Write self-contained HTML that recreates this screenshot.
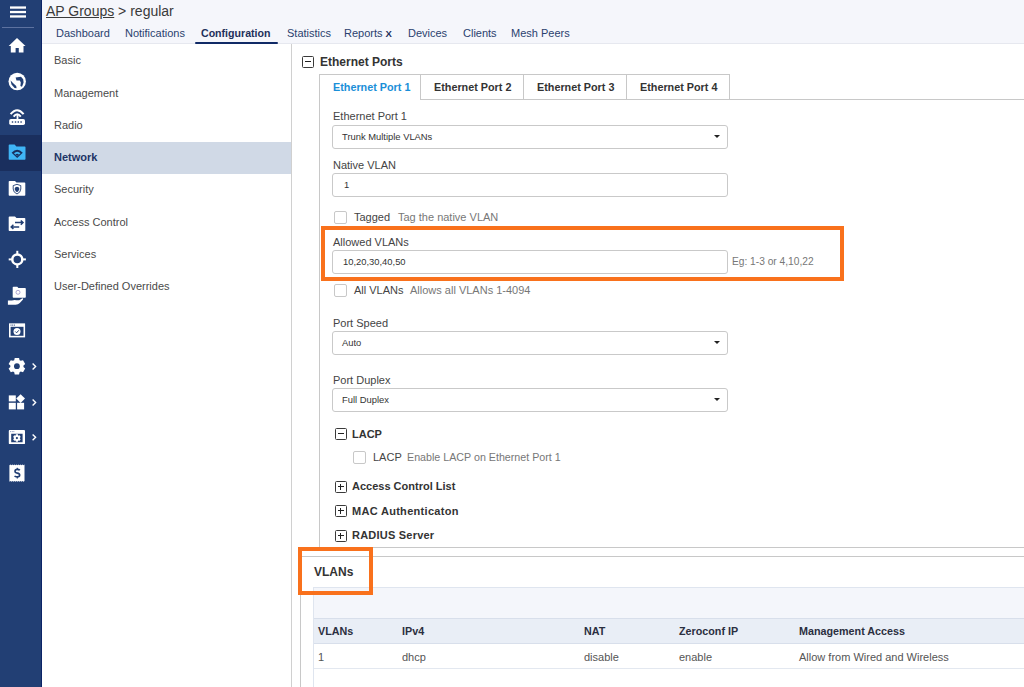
<!DOCTYPE html>
<html><head><meta charset="utf-8">
<style>
*{box-sizing:border-box;margin:0;padding:0}
html,body{width:1024px;height:687px;overflow:hidden;background:#fff;font-family:"Liberation Sans",sans-serif;color:#333}
.abs{position:absolute}
#side{left:0;top:0;width:42px;height:687px;background:#223f74;border-right:1px solid #0b2366}
#hdr{left:42px;top:0;width:982px;height:44px;background:#f5f6fb;border-bottom:1px solid #e6e8ef}
.t{position:absolute;white-space:nowrap;line-height:1}
.menu{font-size:11px;color:#4a4a4a}
.lbl{font-size:11px;color:#444}
.box{position:absolute;border:1px solid #c9c9c9;border-radius:3px;background:#fff}
.val{font-size:9.4px;color:#333}
.cb{position:absolute;width:13px;height:13px;border:1px solid #c8c8c8;border-radius:2px;background:#fff}
.caret{position:absolute;width:0;height:0;border-left:3.3px solid transparent;border-right:3.3px solid transparent;border-top:3.6px solid #222}
.sq{position:absolute;width:12px;height:12px;border:1.2px solid #3a3a3a;border-radius:1.5px}
.sq:before{content:"";position:absolute;left:1.8px;right:1.8px;top:4.3px;height:1.2px;background:#222}
.sq.plus:after{content:"";position:absolute;top:1.8px;bottom:1.8px;left:4.3px;width:1.2px;background:#222}
.b{font-weight:bold}
.orange{position:absolute;border:3px solid #f9711c}
</style></head><body>
<div id="side" class="abs"></div>
<svg class="abs" style="left:0;top:0" width="42" height="687" viewBox="0 0 42 687">
<rect x="0" y="135" width="41" height="36" fill="#1a2f5e"/>
<g fill="#fff">
<rect x="10" y="6.4" width="16" height="2.3"/><rect x="10" y="10.9" width="16" height="2.3"/><rect x="10" y="15.3" width="16" height="2.3"/>
</g>
<rect x="2" y="27" width="32" height="1" fill="#5d72a0"/>
<path d="M17 38 L25.5 46 L23.5 46 L23.5 52.5 L18.8 52.5 L18.8 48 L15.6 48 L15.6 52.5 L10.8 52.5 L10.8 46 L8.7 46 Z" fill="#fff"/>
<circle cx="17.2" cy="81.5" r="8.7" fill="#fff"/>
<path d="M15.6 77.6 L21 76.8 L23.2 79.3 L23.6 82.5 L22 86.8 L20.4 86 L20.8 82.6 L19.8 80.6 L16.5 80.6 Z" fill="#223f74"/>
<path d="M10.6 80.6 L13.2 83.2 L16.2 86 L16.6 88.2 L14.6 88 L11.5 84.6 Z" fill="#223f74"/>
<g fill="none" stroke="#fff" stroke-width="2">
<path d="M10.6 114.2 Q17.2 106.2 23.6 114.2"/><path d="M13.6 116.6 Q17.2 111.8 20.8 116.6"/>
</g>
<rect x="16.6" y="115" width="1.8" height="4.5" fill="#fff"/>
<rect x="9.2" y="119" width="15.8" height="6" rx="1.8" fill="#fff"/>
<g fill="#223f74"><rect x="11.8" y="121.3" width="1.4" height="1.4"/><rect x="14.8" y="121.3" width="1.4" height="1.4"/><rect x="17.6" y="121.3" width="1.4" height="1.4"/><rect x="20.4" y="121.3" width="1.4" height="1.4"/></g>
<path d="M8.7 145.2 Q8.7 144.4 9.5 144.4 L14.6 144.4 L16.4 146.5 L24.7 146.5 Q25.5 146.5 25.5 147.3 L25.5 158.9 Q25.5 159.7 24.7 159.7 L9.5 159.7 Q8.7 159.7 8.7 158.9 Z" fill="#3fb5f6"/>
<path d="M11.6 152.8 Q17.2 146.8 22.8 152.8 L17.2 158 Z" fill="#1a2f5e"/>
<path d="M13.9 153.3 Q17.2 150.2 20.5 153.3 L17.2 156.2 Z" fill="#3fb5f6"/>
<path d="M15.4 154.4 Q17.2 153 19 154.4 L17.2 156 Z" fill="#1a2f5e"/>
<path d="M8.7 181.8 Q8.7 181 9.5 181 L15 181 L16.5 182.5 L24.5 182.5 Q25.3 182.5 25.3 183.3 L25.3 195 Q25.3 195.8 24.5 195.8 L9.5 195.8 Q8.7 195.8 8.7 195 Z" fill="#fff"/>
<path d="M17 184.3 L20.8 185.6 L20.8 189 Q20.8 192.3 17 194 Q13.2 192.3 13.2 189 L13.2 185.6 Z" fill="none" stroke="#223f74" stroke-width="0.9"/>
<path d="M17 186.8 Q19.2 186.8 19.2 188.6 L19.2 189.4 Q18.5 191.3 17 192.3 Q15.5 191.3 14.8 189.4 L14.8 188.6 Q14.8 186.8 17 186.8 Z" fill="#223f74"/>
<path d="M8.7 217.3 Q8.7 216.5 9.5 216.5 L15 216.5 L16.5 218 L24.5 218 Q25.3 218 25.3 218.8 L25.3 230.2 Q25.3 231 24.5 231 L9.5 231 Q8.7 231 8.7 230.2 Z" fill="#fff"/>
<g fill="none" stroke="#223f74" stroke-width="1.5"><path d="M15 222.6 L23 222.6 M20.8 220.5 L23 222.6 L20.8 224.7"/><path d="M19.2 226.9 L11.2 226.9 M13.4 224.8 L11.2 226.9 L13.4 229"/></g>
<circle cx="17.3" cy="259.4" r="5" fill="none" stroke="#fff" stroke-width="2.5"/>
<g fill="#fff"><rect x="16.3" y="250.8" width="2" height="4"/><rect x="16.3" y="264" width="2" height="4"/><rect x="8.7" y="258.4" width="4" height="2"/><rect x="21.9" y="258.4" width="4" height="2"/></g>
<path d="M12.7 287.6 Q12.7 286.8 13.5 286.8 L17.3 286.8 L18.4 288 L25 288 Q25.8 288 25.8 288.8 L25.8 296.9 Q25.8 297.7 25 297.7 L13.5 297.7 Q12.7 297.7 12.7 296.9 Z" fill="#fff"/>
<circle cx="18" cy="292.3" r="2" fill="none" stroke="#9a90c8" stroke-width="0.8"/>
<path d="M7.9 300.6 L11.8 300.6 Q14.2 299.4 16.4 300.2 L19.2 300.2 L22 298.4 Q23.6 298 23 299.4 L19.8 302.9 Q18.2 304.7 15.6 304.7 L7.9 304.7 Z" fill="#fff"/>
<rect x="9.8" y="324.4" width="14.5" height="12.2" fill="none" stroke="#fff" stroke-width="1.6"/>
<rect x="9" y="323.6" width="16" height="3.2" fill="#fff"/>
<g fill="#223f74"><rect x="10.5" y="324.6" width="1" height="1"/><rect x="12.2" y="324.6" width="1" height="1"/><rect x="13.9" y="324.6" width="1" height="1"/></g>
<circle cx="17" cy="331.5" r="3.5" fill="#fff"/>
<path d="M15.3 331.5 L16.6 332.8 L18.8 330.3" fill="none" stroke="#223f74" stroke-width="1"/>
<path d="M14.23 360.16 L14.72 357.88 L19.08 357.88 L19.57 360.16 L20.79 360.87 L23.02 360.16 L25.19 363.92 L23.46 365.50 L23.46 366.90 L25.19 368.48 L23.02 372.24 L20.79 371.53 L19.57 372.24 L19.08 374.52 L14.72 374.52 L14.23 372.24 L13.01 371.53 L10.78 372.24 L8.61 368.48 L10.34 366.90 L10.34 365.50 L8.61 363.92 L10.78 360.16 L13.01 360.87 Z" fill="#fff"/>
<circle cx="16.9" cy="366.2" r="2.9" fill="#223f74"/>
<path d="M32.6 363.6 L35.6 366.5 L32.6 369.4" fill="none" stroke="#fff" stroke-width="1.4"/>
<rect x="8.8" y="395.4" width="7" height="6" fill="#fff"/>
<rect x="8.8" y="402.8" width="7" height="6.6" fill="#fff"/>
<rect x="17.1" y="402.8" width="7" height="6.6" fill="#fff"/>
<path d="M20.6 394.2 L25 398.6 L20.6 403 L16.2 398.6 Z" fill="#fff"/>
<path d="M32.6 399.6 L35.6 402.5 L32.6 405.4" fill="none" stroke="#fff" stroke-width="1.4"/>
<path d="M8.8 431 Q8.8 430.1 9.7 430.1 L24.1 430.1 Q25 430.1 25 431 L25 443.2 Q25 444.1 24.1 444.1 L9.7 444.1 Q8.8 444.1 8.8 443.2 Z M11.2 433.8 L11.2 442.2 L22.6 442.2 L22.6 433.8 Z" fill="#fff" fill-rule="evenodd"/>
<g fill="#7080b0"><rect x="10.2" y="431.2" width="0.9" height="0.9"/><rect x="11.8" y="431.2" width="0.9" height="0.9"/><rect x="13.4" y="431.2" width="0.9" height="0.9"/></g>
<path d="M15.69 435.36 L15.91 434.33 L17.89 434.33 L18.11 435.36 L18.67 435.68 L19.67 435.36 L20.66 437.07 L19.88 437.78 L19.88 438.42 L20.66 439.13 L19.67 440.84 L18.67 440.52 L18.11 440.84 L17.89 441.87 L15.91 441.87 L15.69 440.84 L15.13 440.52 L14.13 440.84 L13.14 439.13 L13.92 438.42 L13.92 437.78 L13.14 437.07 L14.13 435.36 L15.13 435.68 Z" fill="#fff"/>
<circle cx="16.9" cy="438.1" r="1.1" fill="#223f74"/>
<path d="M32.6 434.4 L35.6 437.3 L32.6 440.2" fill="none" stroke="#fff" stroke-width="1.4"/>
<path d="M9.4 465.2 L10.4 464.6 L11.4 465.2 L12.4 464.6 L13.4 465.2 L14.4 464.6 L15.4 465.2 L16.4 464.6 L17.4 465.2 L18.4 464.6 L19.4 465.2 L20.4 464.6 L21.4 465.2 L22.4 464.6 L23.4 465.2 L24.5 464.6 L24.5 481.1 L23.4 481.7 L22.4 481.1 L21.4 481.7 L20.4 481.1 L19.4 481.7 L18.4 481.1 L17.4 481.7 L16.4 481.1 L15.4 481.7 L14.4 481.1 L13.4 481.7 L12.4 481.1 L11.4 481.7 L10.4 481.1 L9.4 481.7 Z" fill="#fff"/>
<path d="M19.8 470.2 Q19.2 469.4 17.3 469.4 Q15 469.4 15 471.3 Q15 472.8 17.3 473.1 Q19.7 473.4 19.7 475.1 Q19.7 476.9 17.3 476.9 Q15.3 476.9 14.6 475.9" fill="none" stroke="#223f74" stroke-width="1.6"/>
<rect x="16.7" y="467.8" width="1.2" height="1.4" fill="#223f74"/><rect x="16.7" y="477.1" width="1.2" height="1.4" fill="#223f74"/>
</svg>
<div id="hdr" class="abs"></div>

<!-- breadcrumb -->
<div class="t" style="left:46px;top:4px;font-size:14px;color:#3a3a3a"><span style="text-decoration:underline;text-underline-offset:1px">AP Groups</span> &gt; regular</div>
<!-- tabs -->
<div class="t" style="left:56px;top:28px;font-size:11px;color:#2a3f6e">Dashboard</div>
<div class="t" style="left:125px;top:28px;font-size:11px;color:#2a3f6e">Notifications</div>
<div class="t b" style="left:201px;top:28px;font-size:10.6px;color:#1d2f5a">Configuration</div>
<div class="abs" style="left:195px;top:42px;width:83px;height:2.2px;border-radius:1.5px;background:#102a66"></div>
<div class="t" style="left:287px;top:28px;font-size:11px;color:#2a3f6e">Statistics</div>
<div class="t" style="left:344px;top:28px;font-size:11px;color:#2a3f6e">Reports <b style="font-size:9.5px;color:#1d2f5a">X</b></div>
<div class="t" style="left:408px;top:28px;font-size:11px;color:#2a3f6e">Devices</div>
<div class="t" style="left:463px;top:28px;font-size:11px;color:#2a3f6e">Clients</div>
<div class="t" style="left:511px;top:28px;font-size:11px;color:#2a3f6e">Mesh Peers</div>

<!-- left menu -->
<div class="abs" style="left:291px;top:44px;width:1px;height:643px;background:#d0d0d0"></div>
<div class="abs" style="left:42px;top:142px;width:249px;height:32px;background:#d0d9e6"></div>
<div class="t menu" style="left:54px;top:55px">Basic</div>
<div class="t menu" style="left:54px;top:88px">Management</div>
<div class="t menu" style="left:54px;top:120px">Radio</div>
<div class="t menu b" style="left:54px;top:152px;color:#1d3566">Network</div>
<div class="t menu" style="left:54px;top:184px">Security</div>
<div class="t menu" style="left:54px;top:217px">Access Control</div>
<div class="t menu" style="left:54px;top:249px">Services</div>
<div class="t menu" style="left:54px;top:281px">User-Defined Overrides</div>

<!-- Ethernet ports -->
<div class="sq" style="left:302px;top:56px"></div>
<div class="t b" style="left:320px;top:56px;font-size:12px;color:#333">Ethernet Ports</div>

<!-- port tabs -->
<div class="abs" style="left:319px;top:99px;width:705px;height:1px;background:#c8c8c8"></div>
<div class="abs" style="left:319px;top:74px;width:102px;height:26px;border:1px solid #c8c8c8;border-bottom:none;background:#fff"></div>
<div class="abs" style="left:421px;top:74px;width:103px;height:26px;border:1px solid #c8c8c8;border-left:none"></div>
<div class="abs" style="left:523px;top:74px;width:104px;height:26px;border:1px solid #c8c8c8"></div>
<div class="abs" style="left:626px;top:74px;width:104px;height:26px;border:1px solid #c8c8c8"></div>
<div class="t b" style="left:333px;top:82px;font-size:10.8px;color:#1a8fd8">Ethernet Port 1</div>
<div class="t b" style="left:434px;top:82px;font-size:10.8px;color:#333">Ethernet Port 2</div>
<div class="t b" style="left:537px;top:82px;font-size:10.8px;color:#333">Ethernet Port 3</div>
<div class="t b" style="left:640px;top:82px;font-size:10.8px;color:#333">Ethernet Port 4</div>
<div class="abs" style="left:319px;top:100px;width:1px;height:447px;background:#c8c8c8"></div>

<!-- form -->
<div class="t lbl" style="left:333px;top:111px">Ethernet Port 1</div>
<div class="box" style="left:332px;top:125px;width:396px;height:24px"></div>
<div class="t val" style="left:342px;top:132px">Trunk Multiple VLANs</div>
<div class="caret" style="left:714px;top:135px"></div>

<div class="t lbl" style="left:333px;top:160px">Native VLAN</div>
<div class="box" style="left:332px;top:173px;width:396px;height:24px"></div>
<div class="t val" style="left:344px;top:180px">1</div>

<div class="cb" style="left:334px;top:211px"></div>
<div class="t lbl" style="left:354px;top:212px">Tagged</div>
<div class="t lbl" style="left:398px;top:212px;color:#777">Tag the native VLAN</div>

<div class="t lbl" style="left:333px;top:237px">Allowed VLANs</div>
<div class="box" style="left:332px;top:250px;width:396px;height:24px"></div>
<div class="t val" style="left:343px;top:257px">10,20,30,40,50</div>
<div class="t lbl" style="left:732px;top:257px;color:#777;font-size:10.2px">Eg: 1-3 or 4,10,22</div>
<div class="orange" style="left:321px;top:226px;width:523px;height:55px;border-width:4px"></div>

<div class="cb" style="left:334px;top:284px"></div>
<div class="t lbl" style="left:354px;top:285px">All VLANs</div>
<div class="t lbl" style="left:410px;top:285px;color:#777">Allows all VLANs 1-4094</div>

<div class="t lbl" style="left:333px;top:318px">Port Speed</div>
<div class="box" style="left:332px;top:331px;width:396px;height:24px"></div>
<div class="t val" style="left:342px;top:338px">Auto</div>
<div class="caret" style="left:714px;top:341px"></div>

<div class="t lbl" style="left:333px;top:375px">Port Duplex</div>
<div class="box" style="left:332px;top:388px;width:396px;height:24px"></div>
<div class="t val" style="left:342px;top:395px">Full Duplex</div>
<div class="caret" style="left:714px;top:398px"></div>

<div class="sq" style="left:335px;top:428px"></div>
<div class="t b" style="left:352px;top:429px;font-size:11px;color:#333">LACP</div>
<div class="cb" style="left:353px;top:451px"></div>
<div class="t lbl" style="left:373px;top:452px">LACP</div>
<div class="t lbl" style="left:407px;top:452px;color:#777;font-size:10.7px">Enable LACP on Ethernet Port 1</div>

<div class="sq plus" style="left:335px;top:481px"></div>
<div class="t b" style="left:352px;top:481px;font-size:11px;color:#333">Access Control List</div>
<div class="sq plus" style="left:335px;top:505px"></div>
<div class="t b" style="left:352px;top:506px;font-size:11px;color:#333;letter-spacing:0.3px">MAC Authenticaton</div>
<div class="sq plus" style="left:335px;top:530px"></div>
<div class="t b" style="left:352px;top:530px;font-size:11px;color:#333;letter-spacing:0.22px">RADIUS Server</div>

<div class="abs" style="left:319px;top:547px;width:705px;height:1px;background:#c8c8c8"></div>

<!-- VLANs -->
<div class="abs" style="left:300px;top:556px;width:724px;height:1px;background:#c8c8c8"></div>
<div class="abs" style="left:300px;top:556px;width:1px;height:131px;background:#c8c8c8"></div>
<div class="t b" style="left:314px;top:566px;font-size:12px;color:#333">VLANs</div>
<div class="abs" style="left:313px;top:587px;width:711px;height:120px;border:1px solid #dfe5ef;border-right:none;background:#fff"></div>
<div class="abs" style="left:314px;top:588px;width:710px;height:30px;background:#f4f6fb"></div>
<div class="abs" style="left:314px;top:618px;width:710px;height:26px;background:#e9eef6;border-top:1px solid #d8dfeb;border-bottom:1px solid #d8dfeb"></div>
<div class="abs" style="left:314px;top:668px;width:710px;height:1px;background:#e3e8f0"></div>
<div class="t b" style="left:318px;top:626px;font-size:10.75px;color:#2b2f40">VLANs</div>
<div class="t b" style="left:402px;top:626px;font-size:10.75px;color:#2b2f40">IPv4</div>
<div class="t b" style="left:584px;top:626px;font-size:10.75px;color:#2b2f40">NAT</div>
<div class="t b" style="left:679px;top:626px;font-size:10.75px;color:#2b2f40">Zeroconf IP</div>
<div class="t b" style="left:799px;top:626px;font-size:10.75px;color:#2b2f40">Management Access</div>
<div class="t" style="left:318px;top:652px;font-size:11px;color:#555">1</div>
<div class="t" style="left:402px;top:652px;font-size:11px;color:#555">dhcp</div>
<div class="t" style="left:584px;top:652px;font-size:11px;color:#555">disable</div>
<div class="t" style="left:679px;top:652px;font-size:11px;color:#555">enable</div>
<div class="t" style="left:799px;top:652px;font-size:11px;color:#555">Allow from Wired and Wireless</div>
<div class="orange" style="left:298px;top:547px;width:75px;height:48px;border-width:4px"></div>

</body></html>
